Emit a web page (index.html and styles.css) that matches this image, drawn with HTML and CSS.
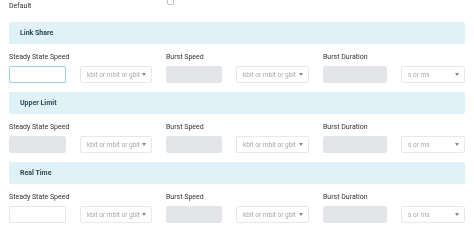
FILE: index.html
```html
<!DOCTYPE html>
<html lang="en">
<head>
    <meta charset="UTF-8">
    <title>Traffic Classes</title>
    <link rel="stylesheet" href="styles.css">
</head>
<body>
    <div class="container">
        <div class="default-row">
            <span class="default-label">Default</span>
            <input type="checkbox" class="default-check">
        </div>

        <!-- Link Share -->
        <div class="band">Link Share</div>
        <div class="form-row">
            <label class="col-1">Steady State Speed</label>
            <label class="col-3">Burst Speed</label>
            <label class="col-5">Burst Duration</label>
            <input type="text" class="field focused">
            <div class="select">kbit or mbit or gbit <span class="caret"></span></div>
            <input type="text" class="field" disabled>
            <div class="select">kbit or mbit or gbit <span class="caret"></span></div>
            <input type="text" class="field" disabled>
            <div class="select">s or ms <span class="caret"></span></div>
        </div>

        <!-- Upper Limit -->
        <div class="band">Upper Limit</div>
        <div class="form-row">
            <label class="col-1">Steady State Speed</label>
            <label class="col-3">Burst Speed</label>
            <label class="col-5">Burst Duration</label>
            <input type="text" class="field" disabled>
            <div class="select">kbit or mbit or gbit <span class="caret"></span></div>
            <input type="text" class="field" disabled>
            <div class="select">kbit or mbit or gbit <span class="caret"></span></div>
            <input type="text" class="field" disabled>
            <div class="select">s or ms <span class="caret"></span></div>
        </div>

        <!-- Real Time -->
        <div class="band">Real Time</div>
        <div class="form-row">
            <label class="col-1">Steady State Speed</label>
            <label class="col-3">Burst Speed</label>
            <label class="col-5">Burst Duration</label>
            <input type="text" class="field">
            <div class="select">kbit or mbit or gbit <span class="caret"></span></div>
            <input type="text" class="field" disabled>
            <div class="select">kbit or mbit or gbit <span class="caret"></span></div>
            <input type="text" class="field" disabled>
            <div class="select">s or ms <span class="caret"></span></div>
        </div>
    </div>
</body>
</html>
```

FILE: styles.css
```css
body {
    margin: 0;
    font-family: Roboto, "Liberation Sans", sans-serif;
    background: #fff;
    color: #444;
    -webkit-font-smoothing: antialiased;
}

/* own layer keeps the small text greyscale-smoothed */
.container {
    padding: 0 9px;
    will-change: transform;
}

.default-row {
    position: relative;
    height: 22px;
    font-size: 7px;
    line-height: 10px;
    padding-top: 1px;
    box-sizing: border-box;
}

.default-label {
    color: #333;
}

.default-check {
    position: absolute;
    left: 158px;
    top: -4px;
    width: 7px;
    height: 9px;
    margin: 0;
    appearance: none;
    border: 1px solid #c4c4c4;
    border-radius: 2px;
    background: #fff;
}

.band {
    height: 22px;
    line-height: 22px;
    padding-left: 11px;
    background: #e0f1f7;
    border-radius: 2px;
    font-size: 7px;
    font-weight: bold;
    color: #2c4c58;
}

.form-row {
    display: grid;
    grid-template-columns: 57px 72px 56px 73px 64px 64px;
    column-gap: 14px;
    row-gap: 4px;
    padding: 8px 0 9px;
}

.form-row label {
    font-size: 7px;
    line-height: 10px;
    color: #333;
    white-space: nowrap;
}

.col-1 { grid-column: 1 / 3; }
.col-3 { grid-column: 3 / 5; }
.col-5 { grid-column: 5 / 7; }

.field {
    height: 17px;
    margin: 0;
    padding: 0 4px;
    box-sizing: border-box;
    border: 1px solid #e6e6e6;
    border-radius: 2px;
    background: #fff;
    font-size: 7px;
}

.field:disabled {
    background: #e3e5e8;
    border-color: #e3e5e8;
}

.focused {
    border-color: #9fd3e3;
    box-shadow: 0 0 1px #bfe4ef;
}

.select {
    height: 17px;
    display: flex;
    align-items: center;
    justify-content: space-between;
    padding: 0 5px 0 6px;
    box-sizing: border-box;
    border: 1px solid #e8e8e8;
    border-radius: 2px;
    font-size: 6.5px;
    color: #a8a8a8;
    white-space: nowrap;
}

.caret {
    width: 0;
    height: 0;
    border-left: 2.5px solid transparent;
    border-right: 2.5px solid transparent;
    border-top: 3px solid #888;
}
```
